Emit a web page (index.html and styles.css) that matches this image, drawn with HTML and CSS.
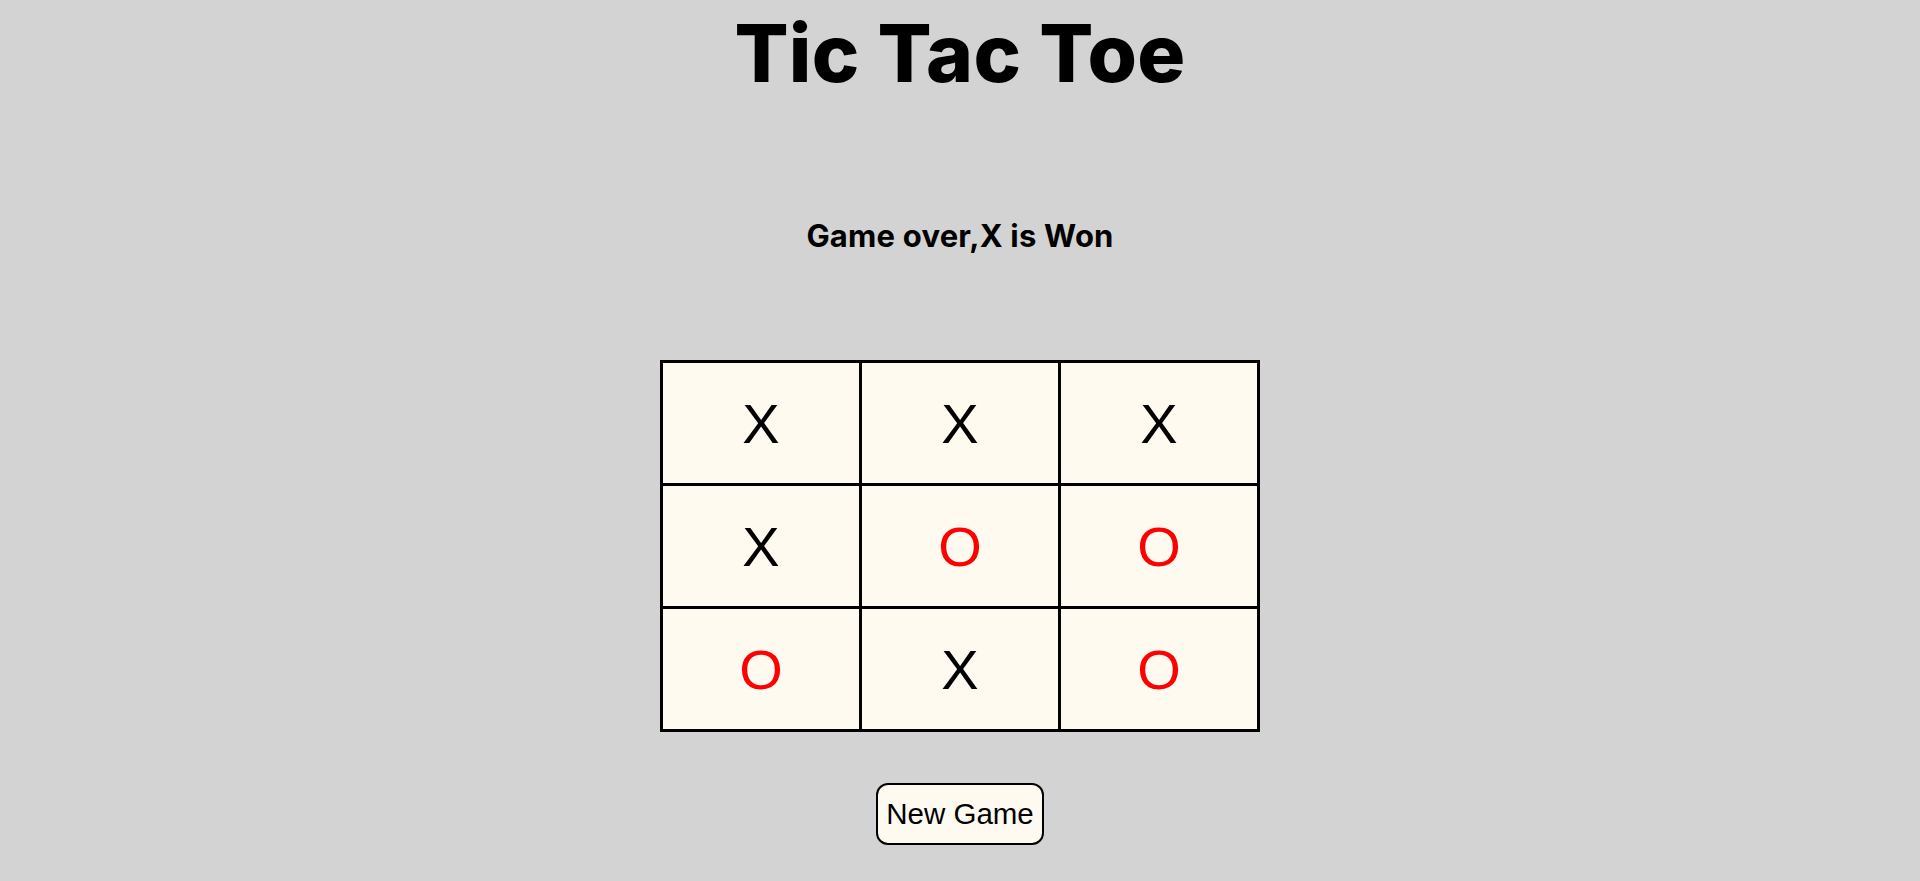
FILE: index.html
```html
<!DOCTYPE html>
<html lang="en">
<head>
<meta charset="utf-8">
<title>Tic Tac Toe</title>
<link rel="stylesheet" href="styles.css">
</head>
<body>
<main class="game">
  <h1 class="title">Tic Tac Toe</h1>
  <p class="status">Game over,X is Won</p>
  <div class="board">
    <button class="cell x">X</button>
    <button class="cell x">X</button>
    <button class="cell x">X</button>
    <button class="cell x">X</button>
    <button class="cell o">O</button>
    <button class="cell o">O</button>
    <button class="cell o">O</button>
    <button class="cell x">X</button>
    <button class="cell o">O</button>
  </div>
  <button class="new-game">New Game</button>
</main>
</body>
</html>
```
FILE: styles.css
```css
html, body {
  margin: 0;
  padding: 0;
  background: #d3d3d3;
}

body {
  width: 1920px;
  height: 881px;
  overflow: hidden;
}

.game {
  display: flex;
  flex-direction: column;
  align-items: center;
}

.title {
  margin: 13px 0 0;
  font-family: Inter, "Noto Sans", sans-serif;
  font-weight: 800;
  font-size: 80px;
  line-height: 80px;
  letter-spacing: 0.3px;
  color: #000;
}

.status {
  margin: 127px 0 0;
  font-family: Inter, "Noto Sans", sans-serif;
  font-weight: 700;
  font-size: 31px;
  line-height: 31px;
  letter-spacing: 0.2px;
  color: #000;
}

.board {
  margin-top: 109px;
  display: grid;
  grid-template-columns: repeat(3, 196px);
  grid-template-rows: repeat(3, 120px);
  gap: 3px;
  padding: 3px;
  background: #000;
}

.cell {
  display: flex;
  align-items: center;
  justify-content: center;
  border: none;
  margin: 0;
  padding: 0;
  background: #fffaf0;
  font-family: "Liberation Sans", Arial, sans-serif;
  font-size: 56px;
  color: #000;
}

.cell.o {
  color: #ff0000;
}

.new-game {
  margin-top: 51px;
  height: 62px;
  padding: 0 8px;
  border: 2px solid #000;
  border-radius: 12px;
  background: #fffaf0;
  font-family: "Liberation Sans", Arial, sans-serif;
  font-size: 29.5px;
  color: #000;
}
```
